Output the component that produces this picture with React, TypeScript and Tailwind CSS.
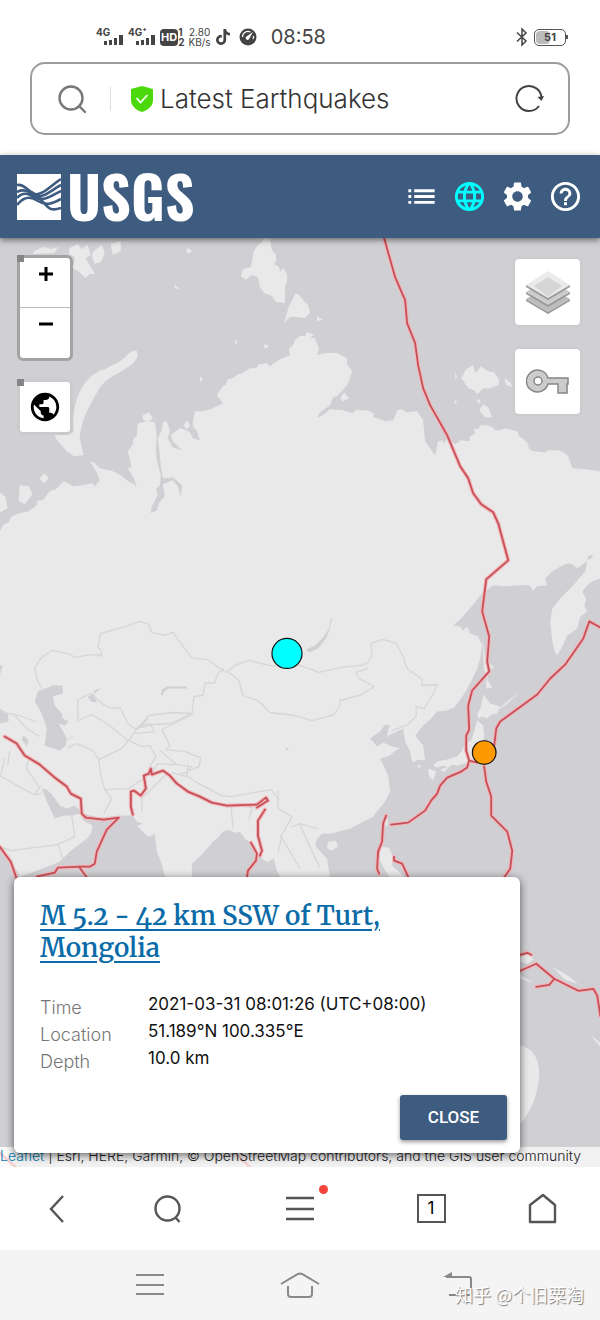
import React from 'react'
import { MdHelpOutline, MdLanguage, MdList, MdPublic, MdSettings } from 'react-icons/md'
import { FaTiktok } from 'react-icons/fa'

const details = [
  { label: 'Time', value: '2021-03-31 08:01:26 (UTC+08:00)' },
  { label: 'Location', value: '51.189°N 100.335°E' },
  { label: 'Depth', value: '10.0 km' },
]

const Signal = ({ label }: { label: string }) => {
  return (
    <div className="flex h-5 w-7 flex-col">
      <span className="text-[10px] leading-[10px] font-bold">{label}</span>
      <svg className="ml-2 h-2 w-5 overflow-visible" viewBox="0 0 20 8" fill="currentColor">
        <path d="M0 4h3v4H0zM5 3h3v5H5zM10 1h3v7h-3zM15-2h4V8h-4z" />
      </svg>
    </div>
  )
}

const StatusBar = () => {
  return (
    <div className="flex h-[62px] items-center pt-3 pr-8 pl-24 text-[#444]">
      <div className="flex items-center gap-1">
        <Signal label="4G" />
        <Signal label="4G⁺" />
        <div className="flex items-center">
          <span className="rounded-sm bg-[#444] px-px text-[11px] leading-[17px] font-bold text-white">HD</span>
          <span className="flex flex-col text-[10px] leading-[10px] font-bold">
            <span>1</span>
            <span>2</span>
          </span>
        </div>
        <div className="flex flex-col text-center text-[10px] leading-[10px]">
          <span>2.80</span>
          <span>KB/s</span>
        </div>
      </div>
      <FaTiktok className="ml-1 size-4" />
      <svg className="ml-2 size-[18px]" viewBox="0 0 18 18">
        <circle cx="9" cy="9" r="8.5" fill="#444" />
        <path d="M3.500 9a5.500 5.500 0 0 1 8-5M14.500 8a5.500 5.500 0 0 1-.5 3" fill="none" stroke="#fff" strokeWidth="1.200" />
        <path d="M14 4 7.500 8.500a1.800 1.800 0 1 0 2.500 2.500Z" fill="#fff" />
      </svg>
      <span className="ml-3.5 text-[20px] leading-6">08:58</span>
      <svg className="ml-auto h-5 w-3" viewBox="0 0 12 20" fill="none" stroke="#444" strokeWidth="1.500">
        <path d="m1 5.500 9 8.500-4 4V2l4 4-9 8.500" />
      </svg>
      <div className="ml-1.5 flex items-center">
        <div className="relative flex h-[17px] w-8 items-center justify-center rounded-[5px] border border-[#555] text-[11px] leading-none font-bold">
          <span className="absolute inset-y-px left-px w-3.5 rounded-sm bg-[#bbb]" />
          <span className="relative">51</span>
        </div>
        <span className="h-1 w-0.5 bg-[#555]" />
      </div>
    </div>
  )
}

const AddressBar = () => {
  return (
    <div className="px-[30px] pb-5">
      <div className="flex h-[73px] items-center rounded-[15px] border-2 border-[#9c9c9c] pr-[23px] pl-[26px]">
        <svg className="size-[30px]" viewBox="0 0 30 30" fill="none" stroke="#777" strokeWidth="2.400" strokeLinecap="round">
          <circle cx="13" cy="14" r="11.500" />
          <path d="m21 22 6 6" />
        </svg>
        <span className="ml-[22px] h-6 w-px bg-[#ddd]" />
        <svg className="ml-[19px] h-7 w-6" viewBox="0 0 24 28">
          <path d="M12 1 23 4v11c0 6-5 10-11 12C6 25 1 21 1 15V4Z" fill="#4cd90b" />
          <path d="m6.500 13 4 4.500 7-7.500" fill="none" stroke="#fff" strokeWidth="1.800" />
        </svg>
        <input
          aria-label="Address"
          className="ml-1.5 min-w-0 flex-1 bg-transparent text-[26px] font-light text-[#333] outline-none"
          defaultValue="Latest Earthquakes"
        />
        <button aria-label="Reload">
          <svg className="size-[30px]" viewBox="0 0 30 30" fill="none" stroke="#444" strokeWidth="2">
            <path d="M24 22a12.500 12.500 0 1 1 2.500-7" />
            <path d="m22.500 13 6.500-1-2.500 5Z" fill="#444" stroke="none" />
          </svg>
        </button>
      </div>
    </div>
  )
}

const Logo = () => {
  return (
    <div className="flex items-center gap-1.5 text-white">
      <svg className="h-[46px] w-11" viewBox="0 0 44 46">
        <path d="M0 0h44v46H0z" fill="#fff" />
        <g fill="none" stroke="#3d5c80" strokeWidth="2.600">
          <path d="M0 11c7-1 10 5 17 9 8 2 16-8 27-15" />
          <path d="M0 18c7-4 12 0 18 4 9 2 15-5 26-11" />
          <path d="M0 24c7-8 13-3 19 0 9 3 15-2 25-7" />
          <path d="M0 31c8-10 15-8 21-4 8 5 14 3 23-2" />
          <path d="M14 18c10 4 13 14 20 17 4 1 7 0 10-1" />
        </g>
      </svg>
      <span className="pb-1 font-['Oswald','Liberation_Sans_Narrow','Liberation_Sans',sans-serif] text-[58px] leading-[58px] font-bold">USGS</span>
    </div>
  )
}

const Header = () => {
  return (
    <header className="relative z-10 flex h-[83px] items-center justify-between bg-[#3d5c80] px-[17px] shadow-[0_2px_6px_rgba(0,0,0,0.5)]">
      <Logo />
      <nav className="flex items-center gap-[13px] text-white">
        <button aria-label="List"><MdList className="size-[35px]" /></button>
        <button aria-label="Map" className="text-[#00ffff]"><MdLanguage className="size-[35px]" /></button>
        <button aria-label="Settings"><MdSettings className="size-[35px]" /></button>
        <button aria-label="Help"><MdHelpOutline className="size-[35px]" /></button>
      </nav>
    </header>
  )
}

const MapDrawing = () => {
  return (
    <svg className="absolute inset-0 size-full" viewBox="0 238 600 928" preserveAspectRatio="xMidYMid slice">
      {/* mainland */}
      <path
        fill="#e9e9e9"
        d="M0 531 4 524 9 522 12 516 20 513 29 511 37 505 38 500 43 500 50 491 56 489 60 485 64 481 68 483 73 486 82 485 93 483 95 486 100 480 97 472 90 461 94 462 100 468 113 471 121 475 127 480 133 483 137 487 134 478 128 468 132 467 130 459 128 451 133 444 134 438 137 436 138 423 147 421 155 422 157 436 156 451 157 460 161 475 160 485 156 489 158 495 152 506 151 513 157 510 159 503 165 496 163 484 173 480 178 486 181 497 182 485 173 477 163 478 161 466 160 455 158 438 162 430 163 422 167 421 170 430 168 438 173 447 182 450 173 441 171 435 180 428 184 429 190 432 193 438 200 440 197 431 193 426 193 421 195 411 203 411 213 408 223 403 217 395 222 387 226 384 228 379 233 378 238 374 242 373 250 368 256 368 259 364 267 363 270 366 280 359 290 355 289 349 293 345 295 340 300 336 305 336 307 332 314 335 310 338 315 338 319 349 317 355 325 353 337 353 347 358 347 364 352 371 350 378 347 385 337 396 333 397 330 405 320 412 317 418 324 414 330 409 343 410 353 413 355 410 367 410 374 413 373 417 377 418 385 421 393 420 395 416 397 410 402 409 406 412 417 411 423 420 425 441 430 448 435 455 438 441 442 440 444 443 447 438 455 444 461 440 467 441 470 440 469 437 475 433 473 428 478 429 480 425 487 425 492 427 495 430 500 430 504 428 517 431 519 436 523 439 527 442 529 449 533 451 545 452 548 450 557 450 563 452 568 456 572 468 585 469 600 471V578L592 581 587 585 582 591 586 599 584 605 587 611 580 616 577 628 567 635 562 646 557 655 555 652 552 641 550 621 552 608 560 598 573 585 579 578 585 571 587 561 577 568 570 563 565 564 557 568 551 572 545 578 547 585 537 586 533 590 529 585 517 585 505 586 493 585 486 590 480 595 473 604 467 611 460 619 453 625 460 626 463 630 467 626 470 633 478 636 482 645 480 658 477 668 471 681 463 695 454 707 447 710 437 711 430 719 423 725 415 735 423 745 425 760 418 759 413 762 411 757 410 751 405 741 403 728 397 731 387 736 388 729 390 725 385 724 380 731 370 738 377 746 383 742 392 746 400 748 394 751 390 755 380 758 384 766 388 775 389 783 390 791 385 801 377 811 372 817 363 821 350 828 338 831 330 833 322 833 317 838 315 845 327 858 331 885 310 900 285 885 277 870 274 858 268 861 265 860 260 856 257 852 251 842 246 839 240 831 235 832 229 829 223 831 218 837 213 841 203 853 192 863V885H168L162 864 157 851 155 833 150 836 147 835 137 825 143 823 137 821 133 815 122 815 100 817 83 813 75 805 67 808 60 805 53 795 47 789 42 788 47 801 55 818 65 815 73 815 80 813 84 820 93 825 91 833 87 838 70 851 60 861 50 865 34 871 20 876 15 866 9 855 0 846Z"
      />
      {/* islands */}
      <g fill="#e9e9e9">
        <path d="M137 351c3 8-3 13-17 21-18 9-20 15-27 28-8 14-12 25-13 38l4 17-10 1-7-5-11-13-1-4 19-2c-3-30 9-52 22-59l6-4 2 1c8-6 18-8 23-15 4-4 8-5 10-4Z" />
        <path d="m254 251 4-6 4-3 2-4 6 1 2 11 4 5 0 6-2 3 5 3 1 5 3-4 4 6 0 8-2 4 0 17-9-1-4-6-8-3-4-6-2-10-6-2-6 5-5-4 2-7 8-2Z" />
        <path d="m284 323 5-17 3-5 3-7 3 0 4 4 1 2 5 5 2 8-5 5-9-1-6 0-4 4ZM317 316l6 4-6 1Z" />
        <path d="m70 248 8-4 4 5 6-4 3 10-5 3 4 8-9 6-7-3-3-8 4-4-6-3ZM94 251l8-6 3 8-4 9-6 2-3-8ZM111 244l10-3v10l-8 4ZM80 267l10-2 5 9-5 0-4 4-9-8ZM188 248l4 3-3 3-3-3ZM174 284l7 6-6-2ZM35 251l8-4 9 2 6-2-3 6-22 1ZM143 415l6-3 4 6-5 4-5-3ZM40 478l5-5 4 5-4 5-4-3ZM235 340l3 2-2 3ZM200 376l3 3-3 3ZM20 485l9 1 4 8-8 10-6-3ZM0 492l6 5 2 11-8 4ZM75 257l-5 4 4 5ZM184 424l4-4 2 6-4 3ZM264 344l5 2-4 3Z" />
        <path d="m461 378 5-9 7-4 2 8 6-7 7 5 6 1 5 8-1 5-8 3-7 0-6 6-3-4-6-2-4-6ZM504 378l6 4 2 5-6-2ZM479 410l4-6 5 3 4 10-7 0ZM455 371l2 6-2 3ZM340 398l4-6 5 6-6 3ZM476 400l4-1 0 5ZM454 400l3 1-2 3Z" />
        <path d="m482 636 3 22 9 9-5 2-2 10-3-10ZM486 678l6 9-6 1ZM483 694l7 9 10 3-3 7-6 1-4 4-5-2-4 2-1-4 2-4 2-4ZM494 712l14-12 12-8-14 12Z" />
        <path d="m477 720 6 5 1 10-2 12 0 12-5 2-9 1-11 3-5-1-4 3-5-2-6 2-4-2 4-4 10-2 10-3 5-6 3-7 6-3 3-9ZM428 768l8 3-3 9-4-4ZM440 769l9-3-5 6ZM385 818l3 1-1 8-3-6ZM328 841l8-1 2 6-7 4-4-3ZM381 846l8 1 4 9-1 9 7 6 7 7-14 2-8-12-5-10ZM417 765l4 0-2 3Z" />
        <path d="M520 1045c12 2 19 12 19 28-1 20-8 37-19 50ZM522 951l8 1 3 7-6 4-7-2ZM552 966l14 8 12 9-13-4ZM590 1034l10 8v4ZM520 974l12 8-12-4ZM0 1146h14v20H0Z" />
      </g>
      {/* inland water */}
      <g fill="#d0cfd3">
        <path d="m38 691 15-6h10v8l-10 3 2 9 7 8 1 5 6 3-4 4-6-2 8 15-1 7-6 5-15-5 2-17-5-15-7-12ZM0 708l8 5 1 8-9 2ZM88 696l6-3 3 9-6-1ZM94 690l7-2-6 5ZM285 747l4 1-2 2ZM0 664l3 2-3 9ZM588 556l5-2-2 4-4 2ZM24 735l5 5-2 6-5-7Z" />
        <path d="m161 694 1-5 5-3 20 0 0 2-18 0-5 3-1 4ZM306 649l9-4 9-9 5-8 2-11 1 1-2 10-4 10-8 10-9 4ZM600 585l-10 3-4 9 2 12 12-1Z" />
      </g>
      {/* country borders */}
      <g fill="none" stroke="#d6d6d8" strokeWidth="1.300" strokeLinejoin="round">
        <path d="m42 688-5-10-2-11 7-10 10-7 19 4 4 3 11-2 12-1 4 2-1-7-3-2 3-14 22-6 17-6 9 3 3 8 12 3 9-3 17 23 4 3 13 1 19 13 9-7 14-5 20 5 14 1 17-1 19 7 22-5 20-2 7-3 4-7-1-12 12-4 13 4 7 13 4 12 15 11 0 6 15-1-5 11-8 13-8-2v10l-8 8-16 6" />
        <path d="m224 668-6 5-3 9-10 1-2 12-9 1-1 10-1 8-30 15 8 16-4 4 19 2 16 6-2 9-10 4" />
        <path d="m228 671 11 9 4 15 15 5 12 12 25 3 17 5 22-6 6-9 0-5 22-6 12-8-15-8-3-6 12-4" />
        <path d="m78 720v-21l13-6 11 10 7 4 12 1 7 15 9 6 12-14 24-3 18 1-19 10-19 1-13 3 8-9" />
        <path d="m78 720 14-6 18 11 18 15-6 8-23 11-6-9-16-7-9 4M66 740l8-4M0 711l20 4 16 6M15 715l12 13 13 8M129 740l13 6 8-1 6 11-6 10M129 740l9-14 12-3 5 8-20 2M99 759l2 16 4 14 24-1 16-11 6-11M105 789l7 9-8 15M160 750l17 14-19-1-7 10M177 764l15 2-5 6-7 1M188 763l-1 13-15-4M188 776l7 5 27 14 9 1 34-6 6-1 8 10" />
        <path d="m28 760-1 8 12 18M0 775l34 19 8-1M5 758l-4 17M10 750l-2 15M35 794l6-9M72 815l3 21-17 8-47 6-11-4M58 844l5 14M142 811l0-13 24-24M231 804l21 3-3 12M231 804l2 23M278 790l0 18 14 8-10 18-4 18M292 826l8-3 17 5M280 834l20 34M300 824l9 20 11 23" />
      </g>
      {/* plate boundaries */}
      <g fill="none" strokeLinejoin="round" strokeLinecap="round">
        <g stroke="#f2b6b8" strokeWidth="4"><use href="#plates" /></g>
        <g stroke="#c65059" strokeWidth="1.800"><use href="#plates" /></g>
      </g>
      <defs>
        <path
          id="plates"
          d="M384 238 395 277 405 300 407 323 415 343 418 365 423 388 430 405 447 435 460 466 468 478 473 493 481 504 493 512 498 523 508 560 486 579 482 611 489 636 487 661 489 671 472 690 468 705 469 729 466 735 466 750 469 760 467 767 461 771 447 777 440 785 437 793 431 800 425 810 408 822 391 824M469 760 477 762M600 627 589 621 583 638 565 664 550 678 537 694 500 721 496 728 494 745M484 766 486 781 491 796 491 815 507 831 512 850 510 868 503 878M386 815 383 823 382 841 378 851 377 868 379 873M394 856 394 860 402 863 408 876M5 736 17 743 25 755 40 764 55 777 67 786 71 793 81 798 82 813 86 817 104 819 119 817 107 829 97 851 95 863 90 866 80 866 58 867 55 872 37 876M80 867 88 878M0 846 11 861 17 878M133 814 131 806 131 791 134 790 141 795 146 788 144 775 149 773 151 768 152 774 163 770 170 775 177 783 188 791 200 796 212 802 227 805 257 804 266 797 268 800 257 807M265 809 258 820 258 835 262 850 260 855M251 842 257 853 256 860 248 870 247 877M520 954 527 952 531 954M520 970 536 963 554 978 578 990 593 988 597 995 600 1015M554 978 549 984 536 986M0 1152 16 1166M235 1152 250 1166"
        />
      </defs>
      {/* earthquakes */}
      <g stroke="#111" strokeWidth="1.200">
        <circle cx="287" cy="653" r="15" fill="#00ffff" />
        <circle cx="484" cy="752" r="11.800" fill="#ff9900" />
      </g>
    </svg>
  )
}

const MapControls = () => {
  return (
    <>
      <div className="absolute top-[17px] left-[17px] flex flex-col gap-[18px]">
        <div className="relative flex w-14 flex-col rounded-md border-[3px] border-[#a3a3a6] bg-white">
          <button aria-label="Zoom in" className="flex h-[50px] justify-center border-b border-[#bbb] pt-2 pl-0.5">
            <svg className="size-4" viewBox="0 0 16 16"><path d="M1 8h14M8 1v14" stroke="#000" strokeWidth="3" /></svg>
          </button>
          <button aria-label="Zoom out" className="flex h-[50px] justify-center pt-2 pl-0.5">
            <svg className="size-4" viewBox="0 0 16 16"><path d="M1 8h14" stroke="#000" strokeWidth="3" /></svg>
          </button>
          <span className="absolute -top-[3px] -left-[3px] size-[7px] bg-[#858585]" />
        </div>
        <div className="relative flex w-14 rounded-md border-[3px] border-[#cbcbce] bg-white">
          <button aria-label="Zoom to world" className="flex h-[50px] flex-1 items-center justify-center">
            <MdPublic className="size-[34px]" />
          </button>
          <span className="absolute -top-[3px] -left-[3px] size-[7px] bg-[#858585]" />
        </div>
      </div>
      <div className="absolute top-[19px] right-[18px] flex flex-col gap-5">
        <button aria-label="Layers" className="flex h-[70px] w-[69px] items-center justify-center rounded-md border-2 border-[#cbcbce] bg-white">
          <svg className="h-[44px] w-[46px]" viewBox="0 0 46 44">
            <path d="M1 29 23 16l22 13-22 13Z" fill="#bdbdbd" />
            <path d="m1 29 22 13 22-13v2L23 44 1 31Z" fill="#999" />
            <path d="M1 22 23 9l22 13-22 13Z" fill="#ccc" />
            <path d="m1 22 22 13 22-13v2L23 37 1 24Z" fill="#999" />
            <path d="M1 15 23 1l22 14-22 14Z" fill="#ebebeb" />
            <path d="m9 16 14-9 14 9-14 11Z" fill="#d6d6d6" />
            <path d="m1 15 22 13 22-13v2L23 30 1 17Z" fill="#999" />
          </svg>
        </button>
        <button aria-label="Legend" className="flex h-[69px] w-[69px] items-center justify-center rounded-md border-2 border-[#cbcbce] bg-white">
          <svg className="h-[26px] w-[43px]" viewBox="0 0 43 26" fill="#ccc" stroke="#858585" strokeWidth="1.500">
            <path d="M22 9h20v6h-1v9h-9v-9h-10A11 11 0 1 1 22 9Z" />
            <circle cx="12" cy="12" r="4" fill="#fff" />
          </svg>
        </button>
      </div>
    </>
  )
}

const Attribution = () => {
  return (
    <div className="absolute inset-x-0 bottom-0 h-5 overflow-hidden bg-white/70 text-[14px] leading-[18px] font-light whitespace-nowrap text-[#222]">
      <a href="#leaflet" className="text-[#0078a8]">Leaflet</a> | Esri, HERE, Garmin, © OpenStreetMap contributors, and the GIS user community
    </div>
  )
}

const EventCard = () => {
  return (
    <section className="absolute right-20 bottom-[14px] left-[14px] flex flex-col rounded-md bg-white pt-[23px] pr-[13px] pb-[13px] pl-[26px] shadow-[0_2px_8px_rgba(0,0,0,0.6)]">
      <h2 className="font-['Merriweather','Liberation_Serif',serif] text-[26px] leading-8 font-semibold text-[#0a6ba8] oldstyle-nums">
        <a href="#event" className="underline decoration-2 underline-offset-4">
          M 5.2 - 42 km SSW of Turt,
          <br />
          Mongolia
        </a>
      </h2>
      <dl className="mt-7 flex flex-col">
        {details.map((item) => (
          <div key={item.label} className="flex">
            <dt className="w-[108px] pt-1 text-[18px] leading-[23px] font-light text-[#777]">{item.label}</dt>
            <dd className="text-[17px] leading-6 text-[#111]">{item.value}</dd>
          </div>
        ))}
      </dl>
      <button className="mt-[22px] h-[45px] w-[107px] self-end rounded-[3px] bg-[#3d5c80] font-['Roboto',sans-serif] text-[17px] font-medium text-white shadow-[0_2px_4px_rgba(0,0,0,0.4)]">
        CLOSE
      </button>
    </section>
  )
}

const BrowserNav = () => {
  return (
    <nav className="grid h-[83px] grid-cols-[114fr_108fr_156fr_106fr_116fr] items-center bg-white text-[#555]">
      <button aria-label="Back" className="flex justify-center">
        <svg className="h-8 w-5" viewBox="0 0 20 32" fill="none" stroke="currentColor" strokeWidth="2.400"><path d="M16 3 4 16l12 13" /></svg>
      </button>
      <button aria-label="Search" className="flex justify-center">
        <svg className="size-8" viewBox="0 0 32 32" fill="none" stroke="currentColor" strokeWidth="2.400"><circle cx="15.500" cy="15.500" r="12" /><path d="m23.500 24.500 4 4.500" /></svg>
      </button>
      <button aria-label="Menu" className="flex justify-center">
        <span className="relative">
          <svg className="size-8" viewBox="0 0 32 32" fill="none" stroke="currentColor" strokeWidth="2.400"><path d="M2 5h28M2 16h28M2 26h28" /></svg>
          <span className="absolute -top-2 -right-3 size-[9px] rounded-full bg-[#f4433c]" />
        </span>
      </button>
      <button aria-label="Tabs" className="flex justify-center">
        <span className="flex size-[29px] items-center justify-center border-2 border-[#555] text-[17px] leading-none text-black">1</span>
      </button>
      <button aria-label="Home" className="flex justify-center">
        <svg className="size-8" viewBox="0 0 32 32" fill="none" stroke="currentColor" strokeWidth="2.400" strokeLinejoin="round"><path d="M4 12 17 2l12 10v17H4Z" /></svg>
      </button>
    </nav>
  )
}

const SystemNav = () => {
  return (
    <nav className="relative grid h-[70px] grid-cols-[75fr_150fr_150fr_165fr_60fr] items-center bg-[#f4f4f4] text-[#888]">
      <button aria-label="Recent apps" className="col-start-2 flex justify-center">
        <svg className="size-8" viewBox="0 0 32 32" fill="none" stroke="currentColor" strokeWidth="2"><path d="M2 6h28M2 16h28M2 25h28" /></svg>
      </button>
      <button aria-label="Home screen" className="flex justify-center">
        <svg className="h-8 w-10" viewBox="0 0 40 32" fill="none" stroke="currentColor" strokeWidth="2"><path d="M1 15 18 5q2-1 4 0l17 10M8 17v8q0 3 3 3h18q3 0 3-3v-8" /></svg>
      </button>
      <button aria-label="Go back" className="flex justify-center">
        <svg className="size-8" viewBox="0 0 32 32" fill="none" stroke="currentColor" strokeWidth="2"><path d="M4 8h23q2 0 2 2v14q0 2-2 2H7" /><path d="m1 8 9-5v5Z" fill="currentColor" stroke="none" /></svg>
      </button>
      <span className="absolute right-4 bottom-3.5 font-['Noto_Sans_CJK_SC',sans-serif] text-[18px] leading-6 whitespace-nowrap text-white [text-shadow:1px_1px_1px_#777]">
        知乎 @个旧粟淘
      </span>
    </nav>
  )
}

const App = () => {
  return (
    <div className="flex min-h-screen flex-col bg-white font-['Inter',sans-serif]">
      <StatusBar />
      <AddressBar />
      <Header />
      <main className="relative min-h-[600px] flex-1 overflow-hidden bg-[#d0cfd3]">
        <MapDrawing />
        <MapControls />
        <Attribution />
        <EventCard />
      </main>
      <BrowserNav />
      <SystemNav />
    </div>
  )
}

export default App
